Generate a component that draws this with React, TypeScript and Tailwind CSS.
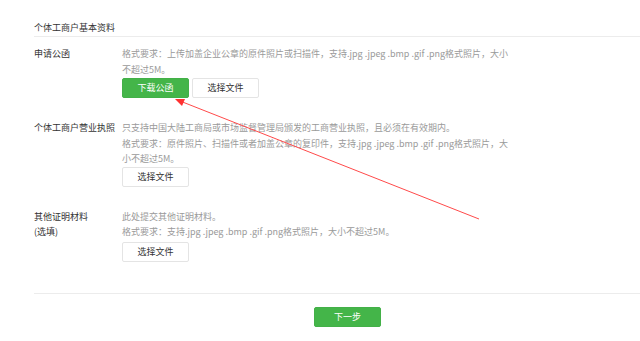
const FONT = "font-['Noto_Sans_CJK_SC','Noto_Sans',sans-serif]";

type Row = {
  label: string[];
  lines: string[];
  buttons: { text: string; primary?: boolean }[];
  mt: string;
  btnMt: string;
};

const ROWS: Row[] = [
  {
    label: ["申请公函"],
    lines: [
      "格式要求：上传加盖企业公章的原件照片或扫描件，支持.jpg .jpeg .bmp .gif .png格式照片，大小",
      "不超过5M。",
    ],
    buttons: [{ text: "下载公函", primary: true }, { text: "选择文件" }],
    mt: "mt-[9px]",
    btnMt: "mt-[1px]",
  },
  {
    label: ["个体工商户营业执照"],
    lines: [
      "只支持中国大陆工商局或市场监督管理局颁发的工商营业执照，且必须在有效期内。",
      "格式要求：原件照片、扫描件或者加盖公章的复印件，支持.jpg .jpeg .bmp .gif .png格式照片，大",
      "小不超过5M。",
    ],
    buttons: [{ text: "选择文件" }],
    mt: "mt-[22px]",
    btnMt: "mt-0",
  },
  {
    label: ["其他证明材料", "(选填)"],
    lines: [
      "此处提交其他证明材料。",
      "格式要求：支持.jpg .jpeg .bmp .gif .png格式照片，大小不超过5M。",
    ],
    buttons: [{ text: "选择文件" }],
    mt: "mt-[22px]",
    btnMt: "mt-[2px]",
  },
];

const Button = ({ text, primary }: { text: string; primary?: boolean }) => (
  <div
    className={
      primary
        ? "flex h-[20px] w-[67px] items-center justify-center rounded-[2px] border border-[#43b048] bg-[#44b549] text-[9px] text-white"
        : "flex h-[20px] w-[67px] items-center justify-center rounded-[2px] border border-[#e4e4e4] bg-white text-[9px] text-[#333]"
    }
  >
    {text}
  </div>
);

export default function App() {
  return (
    <div className={`relative h-[341px] w-[640px] overflow-hidden bg-white pl-[34px] ${FONT}`}>
      <div className="border-b border-[#ececec] pb-[1px] pt-[20px] text-[9px] leading-[15px] text-[#333]">
        个体工商户基本资料
      </div>

      {ROWS.map((row, i) => (
        <div key={i} className={`flex ${row.mt}`}>
          <div className="w-[88px] shrink-0 text-[9px] leading-[15.5px] text-[#333]">
            {row.label.map((l) => (
              <div key={l}>{l}</div>
            ))}
          </div>
          <div className="flex flex-col">
            <div className="text-[9px] leading-[15.5px] text-[#9a9a9a]">
              {row.lines.map((l) => (
                <div key={l} className="whitespace-nowrap">
                  {l}
                </div>
              ))}
            </div>
            <div className={`flex gap-[3px] ${row.btnMt}`}>
              {row.buttons.map((b) => (
                <Button key={b.text} {...b} />
              ))}
            </div>
          </div>
        </div>
      ))}

      <div className="mt-[31px] border-t border-[#ececec]" />
      <div className="ml-[280px] mt-[13px]">
        <Button text="下一步" primary />
      </div>

      <svg
        className="pointer-events-none absolute left-0 top-0"
        width="640"
        height="341"
        viewBox="0 0 640 341"
      >
        <line x1="479" y1="219" x2="180" y2="101" stroke="#ff4a4a" strokeWidth="1" />
        <polygon points="175,99 185,99 182,106" fill="#ff3030" />
      </svg>
    </div>
  );
}
